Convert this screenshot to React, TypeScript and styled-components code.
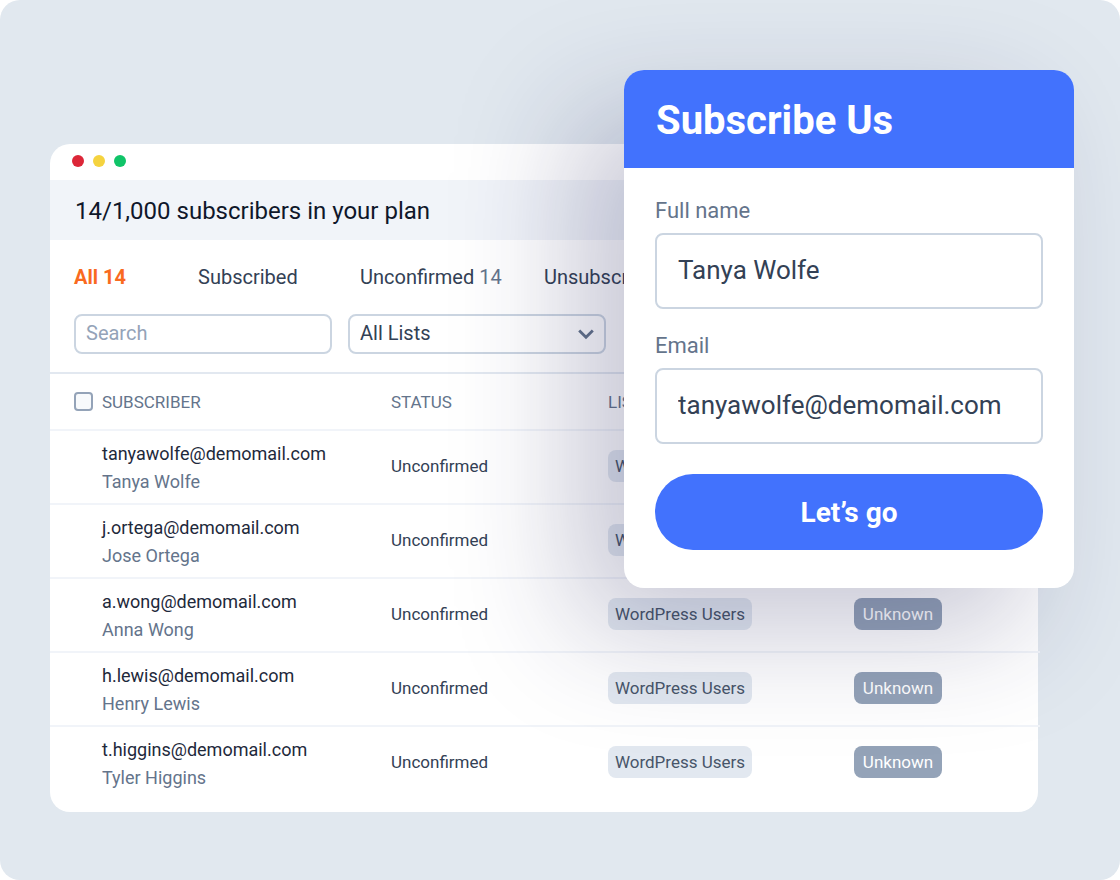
import React from 'react';
import styled, { createGlobalStyle } from 'styled-components';

const GlobalStyle = createGlobalStyle`
  *, *::before, *::after { box-sizing: border-box; }
  body { margin: 0; background: #ffffff; font-family: Roboto, "Liberation Sans", sans-serif; }
  button, input, select { font-family: inherit; margin: 0; }
`;

const Stage = styled.main`
  position: relative;
  min-height: 100vh;
  padding: 144px 82px 68px 50px;
  background: #e1e8ef;
  border-radius: 20px;
  overflow: hidden;
`;

const Window = styled.section`
  background: #ffffff;
  border-radius: 20px;
`;

const TitleBar = styled.div`
  display: flex;
  align-items: center;
  gap: 9px;
  height: 36px;
  padding: 0 22px 2px;
`;

const Dot = styled.span<{ $color: string }>`
  width: 12px;
  height: 12px;
  border-radius: 50%;
  background: ${(p) => p.$color};
`;

const PlanBar = styled.h1`
  margin: 0;
  padding: 2px 25px 0;
  background: #f1f4f9;
  color: #0f172a;
  font-size: 24px;
  font-weight: 400;
  line-height: 58px;
`;

const Toolbar = styled.div`
  padding: 23px 24px 18px;
`;

const Tabs = styled.nav`
  display: grid;
  grid-template-columns: 124px 162px 184px auto;
  justify-content: start;
  margin-bottom: 23px;
`;

const Tab = styled.button<{ $active?: boolean }>`
  padding: 0;
  border: 0;
  background: none;
  text-align: left;
  white-space: nowrap;
  font-size: 20px;
  line-height: 28px;
  font-weight: ${(p) => (p.$active ? 700 : 400)};
  color: ${(p) => (p.$active ? '#f96a1f' : '#334155')};
`;

const TabCount = styled.span`
  color: #64748b;
`;

const Filters = styled.div`
  display: flex;
  gap: 16px;
`;

const SearchInput = styled.input`
  width: 258px;
  height: 40px;
  padding: 0 10px 2px;
  border: 2px solid #cbd5e1;
  border-radius: 8px;
  background: transparent;
  color: #334155;
  font-size: 20px;
  &::placeholder { color: #94a3b8; opacity: 1; }
`;

const SelectWrap = styled.div`
  position: relative;
  width: 258px;
`;

const ListSelect = styled.select`
  appearance: none;
  width: 100%;
  height: 40px;
  padding: 0 40px 2px 10px;
  border: 2px solid #cbd5e1;
  border-radius: 8px;
  background: transparent;
  color: #334155;
  font-size: 20px;
`;

const Chevron = styled.svg`
  position: absolute;
  right: 12px;
  top: 14px;
  pointer-events: none;
`;

const Table = styled.table`
  width: calc(100% + 2px);
  table-layout: fixed;
  border-collapse: separate;
  border-spacing: 0;
  border-top: 2px solid #e2e8f0;
`;

const Col = styled.col<{ $width?: string }>`
  width: ${(p) => p.$width || 'auto'};
`;

const HeadCell = styled.th`
  height: 57px;
  padding: 0;
  border-bottom: 2px solid #f1f4f9;
  color: #64748b;
  font-size: 17px;
  font-weight: 400;
  text-align: left;
  vertical-align: middle;
  text-transform: uppercase;
`;

const HeadLabel = styled.label`
  display: flex;
  align-items: center;
  gap: 9px;
  padding-left: 24px;
`;

const CheckBox = styled.input`
  appearance: none;
  width: 19px;
  height: 19px;
  margin: 0;
  border: 2px solid #94a3b8;
  border-radius: 4px;
  background: #f8fafc;
`;

const Row = styled.tr`
  &:not(:last-child) > td { border-bottom: 2px solid #f1f4f9; }
  &:last-child > td { padding-bottom: 20px; }
`;

const Cell = styled.td`
  padding: 19px 0 0;
  vertical-align: top;
  color: #334155;
  font-size: 17px;
  line-height: 32px;
`;

const PersonCell = styled.td`
  padding: 9px 0 7px 52px;
  vertical-align: top;
  font-size: 18px;
  line-height: 28px;
`;

const Email = styled.div`
  color: #1e293b;
`;

const PersonName = styled.div`
  color: #64748b;
`;

const Tag = styled.span<{ $solid?: boolean }>`
  display: block;
  width: fit-content;
  min-width: ${(p) => (p.$solid ? 88 : 144)}px;
  padding: 0 6px;
  text-align: center;
  border-radius: 8px;
  background: ${(p) => (p.$solid ? '#94a3b8' : '#e2e8f0')};
  color: ${(p) => (p.$solid ? '#ffffff' : '#475569')};
  font-size: 17px;
  line-height: 32px;
`;

const Card = styled.form`
  position: absolute;
  top: 70px;
  right: 46px;
  width: 450px;
  border-radius: 20px;
  background: #ffffff;
  box-shadow: -50px 42px 120px rgba(32, 32, 88, 0.25);
`;

const CardTitle = styled.h2`
  margin: 0;
  padding: 4px 32px 0;
  border-radius: 20px 20px 0 0;
  background: #4272fd;
  color: #ffffff;
  font-size: 40px;
  font-weight: 700;
  line-height: 94px;
`;

const CardBody = styled.div`
  display: flex;
  flex-direction: column;
  padding: 30px 31px 38px;
`;

const FieldLabel = styled.label`
  margin-bottom: 9px;
  color: #64748b;
  font-size: 22px;
  line-height: 26px;
`;

const Field = styled.input`
  height: 76px;
  margin-bottom: 24px;
  padding: 0 21px 2px;
  border: 2px solid #cbd5e1;
  border-radius: 8px;
  background: #ffffff;
  color: #334155;
  font-size: 26px;
`;

const Submit = styled.button`
  height: 76px;
  margin-top: 6px;
  border: 0;
  border-radius: 38px;
  background: #4272fd;
  color: #ffffff;
  font-size: 28px;
  font-weight: 700;
`;

const people = [
  { email: 'tanyawolfe@demomail.com', name: 'Tanya Wolfe' },
  { email: 'j.ortega@demomail.com', name: 'Jose Ortega' },
  { email: 'a.wong@demomail.com', name: 'Anna Wong' },
  { email: 'h.lewis@demomail.com', name: 'Henry Lewis' },
  { email: 't.higgins@demomail.com', name: 'Tyler Higgins' },
];

export default function App() {
  return (
    <>
      <GlobalStyle />
      <Stage>
        <Window>
          <TitleBar>
            <Dot $color="#dc2638" />
            <Dot $color="#f5d33f" />
            <Dot $color="#10c468" />
          </TitleBar>
          <PlanBar>14/1,000 subscribers in your plan</PlanBar>
          <Toolbar>
            <Tabs>
              <Tab type="button" $active>All 14</Tab>
              <Tab type="button">Subscribed</Tab>
              <Tab type="button">Unconfirmed <TabCount>14</TabCount></Tab>
              <Tab type="button">Unsubscribed</Tab>
            </Tabs>
            <Filters>
              <SearchInput type="search" placeholder="Search" aria-label="Search" />
              <SelectWrap>
                <ListSelect aria-label="List" defaultValue="all">
                  <option value="all">All Lists</option>
                </ListSelect>
                <Chevron width="16" height="12" viewBox="0 0 16 12" fill="none" aria-hidden="true">
                  <path d="M1.2 2.4 8 9.200l6.800-6.800" stroke="#64748b" strokeWidth="2.800" />
                </Chevron>
              </SelectWrap>
            </Filters>
          </Toolbar>
          <Table>
            <colgroup>
              <Col $width="341px" />
              <Col $width="217px" />
              <Col $width="246px" />
              <Col />
            </colgroup>
            <thead>
              <tr>
                <HeadCell scope="col">
                  <HeadLabel>
                    <CheckBox type="checkbox" />
                    Subscriber
                  </HeadLabel>
                </HeadCell>
                <HeadCell scope="col">Status</HeadCell>
                <HeadCell scope="col">Lists</HeadCell>
                <HeadCell scope="col" aria-label="Score" />
              </tr>
            </thead>
            <tbody>
              {people.map((p) => (
                <Row key={p.email}>
                  <PersonCell>
                    <Email>{p.email}</Email>
                    <PersonName>{p.name}</PersonName>
                  </PersonCell>
                  <Cell>Unconfirmed</Cell>
                  <Cell><Tag>WordPress Users</Tag></Cell>
                  <Cell><Tag $solid>Unknown</Tag></Cell>
                </Row>
              ))}
            </tbody>
          </Table>
        </Window>
        <Card onSubmit={(e: React.FormEvent) => e.preventDefault()}>
          <CardTitle>Subscribe Us</CardTitle>
          <CardBody>
            <FieldLabel htmlFor="full-name">Full name</FieldLabel>
            <Field id="full-name" type="text" defaultValue="Tanya Wolfe" />
            <FieldLabel htmlFor="email">Email</FieldLabel>
            <Field id="email" type="email" defaultValue="tanyawolfe@demomail.com" />
            <Submit type="submit">Let’s go</Submit>
          </CardBody>
        </Card>
      </Stage>
    </>
  );
}
